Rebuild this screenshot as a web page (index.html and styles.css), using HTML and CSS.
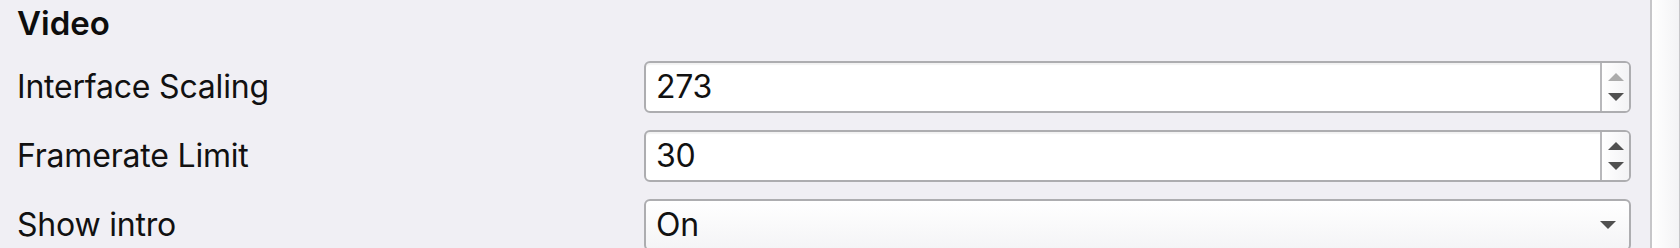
FILE: index.html
```html
<!DOCTYPE html>
<html lang="en">
<head>
<meta charset="utf-8">
<title>Video settings</title>
<link rel="stylesheet" href="styles.css">
</head>
<body>
<div class="page">
  <main class="panel">
    <h2 class="section-title">Video</h2>
    <div class="form">
      <label class="label">Interface Scaling</label>
      <div class="field spin">
        <span class="value">273</span>
        <div class="spin-buttons">
          <svg class="arrow disabled" width="16" height="8" viewBox="0 0 16 8"><polygon points="0,8 16,8 8,0"/></svg>
          <svg class="arrow" width="16" height="8" viewBox="0 0 16 8"><polygon points="0,0 16,0 8,8"/></svg>
        </div>
      </div>

      <label class="label">Framerate Limit</label>
      <div class="field spin">
        <span class="value">30</span>
        <div class="spin-buttons">
          <svg class="arrow" width="16" height="8" viewBox="0 0 16 8"><polygon points="0,8 16,8 8,0"/></svg>
          <svg class="arrow" width="16" height="8" viewBox="0 0 16 8"><polygon points="0,0 16,0 8,8"/></svg>
        </div>
      </div>

      <label class="label">Show intro</label>
      <div class="field combo">
        <span class="value">On</span>
        <svg class="arrow combo-arrow" width="16" height="8" viewBox="0 0 16 8"><polygon points="0,0 16,0 8,8"/></svg>
      </div>
    </div>
  </main>
  <div class="scrollbar"></div>
</div>
</body>
</html>
```

FILE: styles.css
```css
html, body {
  margin: 0;
  padding: 0;
  height: 100%;
  overflow: hidden;
}

body {
  background: #f0eff4;
  font-family: Inter, "Liberation Sans", sans-serif;
  color: #111;
}

.page {
  display: flex;
  height: 248px;
}

.panel {
  flex: 1;
  padding: 1px 19px 0 17px;
  min-width: 0;
}

.section-title {
  margin: 0;
  font-size: 33px;
  line-height: 44px;
  font-weight: 600;
  color: #0d0d0d;
}

.form {
  display: grid;
  grid-template-columns: 627px 1fr;
  grid-auto-rows: 52px;
  row-gap: 17px;
  margin-top: 16px;
  align-items: center;
}

.label {
  font-size: 32px;
  line-height: 40px;
  color: #111;
  letter-spacing: -0.2px;
}

.field {
  box-sizing: border-box;
  height: 52px;
  border: 2px solid #adadb0;
  border-radius: 6px;
  background: #fff;
  display: flex;
  align-items: center;
  overflow: hidden;
}

.value {
  flex: 1;
  padding-left: 10px;
  font-size: 32px;
  line-height: 40px;
  color: #111;
  letter-spacing: -0.3px;
}

.spin {
  box-shadow: inset 0 2px 1px rgba(0, 0, 0, 0.05);
}

.spin-buttons {
  align-self: stretch;
  width: 27px;
  border-left: 2px solid #b8b8bb;
  background: linear-gradient(to right, #ffffff, #f3f3f5);
  display: flex;
  flex-direction: column;
  align-items: center;
  justify-content: center;
  gap: 12px;
}

.arrow {
  display: block;
  fill: #505050;
}

.arrow.disabled {
  fill: #ababab;
}

.combo {
  background: linear-gradient(to bottom, #ffffff, #f4f4f6);
  padding-right: 13px;
}

.scrollbar {
  box-sizing: border-box;
  width: 30px;
  height: 248px;
  border-left: 2px solid #c6c6c9;
  border-right: 1px solid #c6c6c9;
  background: linear-gradient(to right, #ffffff, #f3f3f5);
}
```
